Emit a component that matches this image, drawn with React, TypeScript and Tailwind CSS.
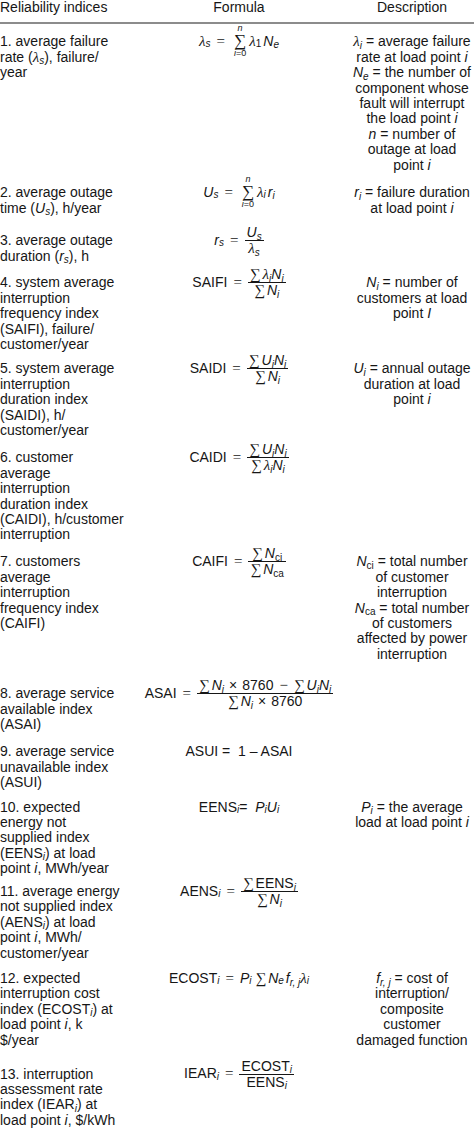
import type { ReactNode } from "react";

const ink = "text-[#161616]";

function L({ children }: { children: ReactNode }) {
  return <div className="whitespace-nowrap">{children}</div>;
}

function Lam() {
  return <span className="font-['Liberation_Serif',serif] italic text-[15px]">λ</span>;
}

function I({ children }: { children: ReactNode }) {
  return <span className="italic">{children}</span>;
}

function Sub({ children, upright }: { children: ReactNode; upright?: boolean }) {
  return <sub className={upright ? "text-[10px]" : "text-[10px] italic"}>{children}</sub>;
}

function Eq() {
  return <span className="font-['Liberation_Serif',serif] text-[15px] mx-[6px]">=</span>;
}

function Sig() {
  return <span className="font-['Liberation_Serif',serif] text-[15px] mr-[2px]">∑</span>;
}

// display-style sum with limits above and below
function SumLim() {
  return (
    <span className="inline-flex flex-col items-center mx-[3px]">
      <span className="text-[9px] leading-[9px] italic">n</span>
      <span className="font-['Liberation_Serif',serif] text-[17px] leading-[15px]">∑</span>
      <span className="text-[9px] leading-[10px]">
        <span className="italic">i</span>=0
      </span>
    </span>
  );
}

function Frac({ num, den }: { num: ReactNode; den: ReactNode }) {
  return (
    <span className="inline-flex flex-col items-center">
      <span className="px-[2px] leading-[15px] whitespace-nowrap">{num}</span>
      <span className="h-px w-full bg-[#161616]" />
      <span className="px-[2px] leading-[15px] whitespace-nowrap">{den}</span>
    </span>
  );
}

function Row({
  mt,
  left,
  formula,
  off,
  desc,
}: {
  mt: string;
  left: ReactNode[];
  formula?: ReactNode;
  off?: string;
  desc?: ReactNode[];
}) {
  return (
    <div className={`grid grid-cols-[128px_222px_124px] ${mt}`}>
      <div className="flex flex-col items-start">
        {left.map((l, i) => (
          <L key={i}>{l}</L>
        ))}
      </div>
      <div className={`flex justify-center items-start whitespace-nowrap ${off ?? ""}`}>
        <div className="flex items-center">{formula}</div>
      </div>
      <div className="flex flex-col items-center">
        {(desc ?? []).map((l, i) => (
          <L key={i}>{l}</L>
        ))}
      </div>
    </div>
  );
}

export default function App() {
  return (
    <div
      className={`w-[474px] min-h-[1131px] overflow-hidden bg-white ${ink} font-['Liberation_Sans',Arial,sans-serif] text-[14px] leading-[15.4px]`}
    >
      {/* header */}
      <div className="grid grid-cols-[128px_222px_124px] pb-[6.6px] border-b-2 border-[#8c8c8c]">
        <div className="whitespace-nowrap">Reliability indices</div>
        <div className="text-center">Formula</div>
        <div className="text-center">Description</div>
      </div>

      <Row
        mt="mt-[10.3px]"
        left={["1. average failure", <>rate (<Lam /><Sub>s</Sub>), failure/</>, "year"]}
        off="-mt-[10px]"
        formula={
          <>
            <Lam />
            <Sub>s</Sub>
            <Eq />
            <SumLim />
            <Lam />
            <Sub upright>1</Sub>
            <span className="ml-[2px]">
              <I>N</I>
              <Sub>e</Sub>
            </span>
          </>
        }
        desc={[
          <><Lam /><Sub>i</Sub> = average failure</>,
          <>rate at load point <I>i</I></>,
          <><I>N</I><Sub>e</Sub> = the number of</>,
          "component whose",
          "fault will interrupt",
          <>the load point <I>i</I></>,
          <><I>n</I> = number of</>,
          "outage at load",
          <>point <I>i</I></>,
        ]}
      />

      <Row
        mt="mt-[12.4px]"
        left={["2. average outage", <>time (<I>U</I><Sub>s</Sub>), h/year</>]}
        off="-mt-[10px]"
        formula={
          <>
            <I>U</I>
            <Sub>s</Sub>
            <Eq />
            <SumLim />
            <Lam />
            <Sub>i</Sub>
            <span className="ml-[2px]">
              <I>r</I>
              <Sub>i</Sub>
            </span>
          </>
        }
        desc={[<><I>r</I><Sub>i</Sub> = failure duration</>, <>at load point <I>i</I></>]}
      />

      <Row
        mt="mt-[17.2px]"
        left={["3. average outage", <>duration (<I>r</I><Sub>s</Sub>), h</>]}
        off="-mt-[8px]"
        formula={
          <>
            <I>r</I>
            <Sub>s</Sub>
            <Eq />
            <Frac
              num={<><I>U</I><Sub>s</Sub></>}
              den={<><Lam /><Sub>s</Sub></>}
            />
          </>
        }
      />

      <Row
        mt="mt-[11.2px]"
        left={["4. system average", "interruption", "frequency index", "(SAIFI), failure/", "customer/year"]}
        off="-mt-[8px]"
        formula={
          <>
            SAIFI
            <Eq />
            <Frac
              num={<><Sig /><Lam /><Sub>i</Sub><I>N</I><Sub>i</Sub></>}
              den={<><Sig /><I>N</I><Sub>i</Sub></>}
            />
          </>
        }
        desc={[<><I>N</I><Sub>i</Sub> = number of</>, "customers at load", <>point <I>I</I></>]}
      />

      <Row
        mt="mt-[9px]"
        left={["5. system average", "interruption", "duration index", "(SAIDI), h/", "customer/year"]}
        off="-mt-[8px]"
        formula={
          <>
            SAIDI
            <Eq />
            <Frac
              num={<><Sig /><I>U</I><Sub>i</Sub><I>N</I><Sub>i</Sub></>}
              den={<><Sig /><I>N</I><Sub>i</Sub></>}
            />
          </>
        }
        desc={[<><I>U</I><Sub>i</Sub> = annual outage</>, "duration at load", <>point <I>i</I></>]}
      />

      <Row
        mt="mt-[12px]"
        left={["6. customer", "average", "interruption", "duration index", "(CAIDI), h/customer", "interruption"]}
        off="-mt-[8px]"
        formula={
          <>
            CAIDI
            <Eq />
            <Frac
              num={<><Sig /><I>U</I><Sub>i</Sub><I>N</I><Sub>i</Sub></>}
              den={<><Sig /><Lam /><Sub>i</Sub><I>N</I><Sub>i</Sub></>}
            />
          </>
        }
      />

      <Row
        mt="mt-[11.6px]"
        left={["7. customers", "average", "interruption", "frequency index", "(CAIFI)"]}
        off="-mt-[8px]"
        formula={
          <>
            CAIFI
            <Eq />
            <Frac
              num={<><Sig /><I>N</I><Sub upright>ci</Sub></>}
              den={<><Sig /><I>N</I><Sub upright>ca</Sub></>}
            />
          </>
        }
        desc={[
          <><I>N</I><Sub upright>ci</Sub> = total number</>,
          "of customer",
          "interruption",
          <><I>N</I><Sub upright>ca</Sub> = total number</>,
          "of customers",
          "affected by power",
          "interruption",
        ]}
      />

      <Row
        mt="mt-[24.2px]"
        left={["8. average service", "available index", "(ASAI)"]}
        off="-mt-[8px]"
        formula={
          <>
            ASAI
            <Eq />
            <Frac
              num={
                <>
                  <Sig /><I>N</I><Sub>i</Sub>
                  <span className="mx-[5px]">×</span>8760
                  <span className="font-['Liberation_Serif',serif] text-[15px] mx-[6px]">−</span>
                  <Sig /><I>U</I><Sub>i</Sub><I>N</I><Sub>i</Sub>
                </>
              }
              den={<><Sig /><I>N</I><Sub>i</Sub><span className="mx-[5px]">×</span>8760</>}
            />
          </>
        }
      />

      <Row
        mt="mt-[11.8px]"
        left={["9. average service", "unavailable index", "(ASUI)"]}
        formula={<>ASUI = &nbsp;1 – ASAI</>}
      />

      <Row
        mt="mt-[8.8px]"
        left={["10. expected", "energy not", "supplied index", <>(EENS<Sub>i</Sub>) at load</>, <>point <I>i</I>, MWh/year</>]}
        formula={
          <>
            EENS<Sub>i</Sub>=&nbsp;&nbsp;<I>P</I><Sub>i</Sub><I>U</I><Sub>i</Sub>
          </>
        }
        desc={[<><I>P</I><Sub>i</Sub> = the average</>, <>load at load point <I>i</I></>]}
      />

      <Row
        mt="mt-[7.5px]"
        left={["11. average energy", "not supplied index", <>(AENS<Sub>i</Sub>) at load</>, <>point <I>i</I>, MWh/</>, "customer/year"]}
        off="-mt-[8px]"
        formula={
          <>
            AENS<Sub>i</Sub>
            <Eq />
            <Frac
              num={<><Sig />EENS<Sub>i</Sub></>}
              den={<><Sig /><I>N</I><Sub>i</Sub></>}
            />
          </>
        }
      />

      <Row
        mt="mt-[10px]"
        left={["12. expected", "interruption cost", <>index (ECOST<Sub>i</Sub>) at</>, <>load point <I>i</I>, k</>, "$/year"]}
        formula={
          <>
            ECOST<Sub>i</Sub>
            <Eq />
            <I>P</I><Sub>i</Sub>
            <span className="ml-[4px]"><Sig /></span>
            <I>N</I><Sub>e</Sub>
            <span className="ml-[2px]"><I>f</I><Sub>r, j</Sub></span>
            <Lam /><Sub>i</Sub>
          </>
        }
        desc={[
          <><I>f</I><Sub>r, j</Sub> = cost of</>,
          "interruption/",
          "composite",
          "customer",
          "damaged function",
        ]}
      />

      <Row
        mt="mt-[18.5px]"
        left={["13. interruption", "assessment rate", <>index (IEAR<Sub>i</Sub>) at</>, <>load point <I>i</I>, $/kWh</>]}
        off="-mt-[8px]"
        formula={
          <>
            IEAR<Sub>i</Sub>
            <Eq />
            <Frac num={<>ECOST<Sub>i</Sub></>} den={<>EENS<Sub>i</Sub></>} />
          </>
        }
      />
    </div>
  );
}
